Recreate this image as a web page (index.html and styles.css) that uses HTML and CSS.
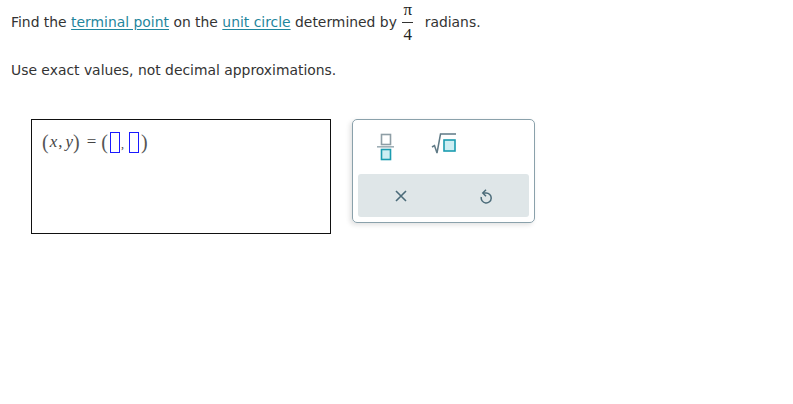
FILE: index.html
```html
<!DOCTYPE html>
<html>
<head>
<meta charset="utf-8">
<link rel="stylesheet" href="styles.css">
</head>
<body>
<div class="page">
  <p class="q1">Find the <a class="lnk">terminal point</a> on the <a class="lnk">unit circle</a> determined by <span class="frac"><span class="num">π</span><span class="den">4</span></span> radians.</p>
  <p class="q2">Use exact values, not decimal approximations.</p>
  <div class="work">
    <div class="answer">
      <div class="math"><span class="par">(</span><i class="vx">x</i><span class="cm">,</span><i class="vy">y</i><span class="par">)</span><span class="eq">=</span><span class="par">(</span><span class="slot"></span><span class="cm2">,</span><span class="slot"></span><span class="par">)</span></div>
    </div>
    <div class="pad">
      <div class="tools">
        <span class="tool">
          <svg width="20" height="28" viewBox="0 0 20 28">
            <rect x="4.5" y="1.5" width="9" height="10" fill="#fff" stroke="#8e9ea6" stroke-width="1.6"/>
            <rect x="0" y="13" width="17" height="1.6" fill="#9fafb6"/>
            <rect x="4.5" y="16.5" width="9" height="10" fill="#cdeef3" stroke="#1b9cb0" stroke-width="1.6"/>
          </svg>
        </span>
        <span class="tool">
          <svg width="26" height="22" viewBox="0 0 26 22">
            <path d="M1 14 L3.5 12.5 L6 20 L9.5 1 L25 1" fill="none" stroke="#5f7a86" stroke-width="1.5"/>
            <rect x="13" y="7" width="11" height="11" fill="#cdeef3" stroke="#1b9cb0" stroke-width="1.6"/>
          </svg>
        </span>
      </div>
      <div class="actions">
        <span class="act">
          <svg width="12" height="12" viewBox="0 0 12 12"><path d="M1 1 L11 11 M11 1 L1 11" stroke="#4b6b79" stroke-width="1.6" fill="none"/></svg>
        </span>
        <span class="act">
          <svg width="14" height="16" viewBox="0 0 14 16"><path d="M2.3 9 A5 5 0 1 0 7 5" fill="none" stroke="#4b6b79" stroke-width="1.5"/><path d="M7 5 L4 5" fill="none" stroke="#4b6b79" stroke-width="1.5"/><path d="M7 1.8 L3.8 5 L7 8.2" fill="none" stroke="#4b6b79" stroke-width="1.5"/></svg>
        </span>
      </div>
    </div>
  </div>
</div>
</body>
</html>
```
FILE: styles.css
```css
html, body { margin: 0; padding: 0; background: #fff; }
.page { padding: 3px 0 0 11px; font-family: "DejaVu Sans", Verdana, sans-serif; font-size: 13.9px; color: #333; }
.q1 { margin: 0; line-height: 38px; height: 38px; }
.lnk { color: #1f869d; text-decoration: underline; text-underline-offset: 2px; }
.frac { display: inline-flex; flex-direction: column; align-items: center; vertical-align: middle; margin: 0 7px 0 1px; font-family: "Liberation Serif", "Times New Roman", serif; font-size: 17px; line-height: 14px; color: #222; position: relative; top: -1px; }
.frac .num { padding: 0 0 5px; border-bottom: 1px solid #333; width: 11px; text-align: center; }
.frac .den { padding-top: 5px; }
.q2 { margin: 21px 0 0; line-height: 16px; }
.work { display: flex; align-items: flex-start; margin: 41px 0 0 20px; gap: 21px; }
.answer { width: 298px; height: 113px; border: 1px solid #111; }
.math { display: flex; align-items: center; margin: 12px 0 0 10px; font-family: "Liberation Serif", "Times New Roman", serif; font-size: 17px; color: #444; height: 20px; }
.math i { font-style: italic; }
.vx { margin-left: 1px; }
.vy { margin-left: 3px; }
.par { font-size: 20px; color: #555; }
.cm { margin-left: 1px; }
.eq { margin: 0 5px 0 7px; }
.slot { width: 8px; height: 19px; border: 1px solid #1a1aff; margin-left: 2px; }
.cm2 { margin: 0 3px 0 1px; font-size: 12px; align-self: flex-end; }
.slot + .par { margin-left: 2px; }
.pad { width: 181px; height: 102px; border: 1px solid #8aa1ab; border-radius: 5px; box-shadow: -2px 2px 5px rgba(0,0,0,0.12); display: flex; flex-direction: column; }
.tools { display: flex; height: 54px; padding-left: 24px; align-items: flex-start; }
.tool { display: flex; }
.tool:first-child { margin-top: 13px; width: 54px; }
.tool:nth-child(2) { margin-top: 13px; }
.actions { display: flex; margin: 0 5px; height: 43px; background: #dfe6e8; border-radius: 3px; align-items: center; }
.act { flex: 1; display: flex; justify-content: center; }
```
